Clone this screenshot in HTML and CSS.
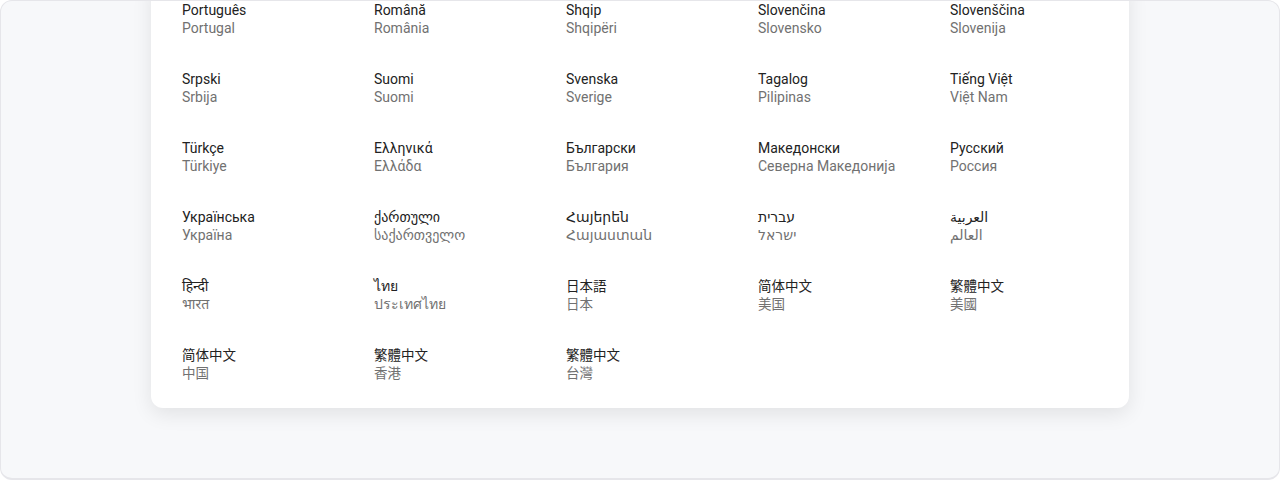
FILE: index.html
```html
<!DOCTYPE html>
<html lang="en">
<head>
<meta charset="utf-8">
<title>Languages</title>
<link rel="stylesheet" href="styles.css">
</head>
<body>
<div class="frame">
  <div class="card">
    <div class="grid">
      <div class="item"><div class="name">Português</div><div class="region">Portugal</div></div>
      <div class="item"><div class="name">Română</div><div class="region">România</div></div>
      <div class="item"><div class="name">Shqip</div><div class="region">Shqipëri</div></div>
      <div class="item"><div class="name">Slovenčina</div><div class="region">Slovensko</div></div>
      <div class="item"><div class="name">Slovenščina</div><div class="region">Slovenija</div></div>

      <div class="item"><div class="name">Srpski</div><div class="region">Srbija</div></div>
      <div class="item"><div class="name">Suomi</div><div class="region">Suomi</div></div>
      <div class="item"><div class="name">Svenska</div><div class="region">Sverige</div></div>
      <div class="item"><div class="name">Tagalog</div><div class="region">Pilipinas</div></div>
      <div class="item"><div class="name">Tiếng Việt</div><div class="region">Việt Nam</div></div>

      <div class="item"><div class="name">Türkçe</div><div class="region">Türkiye</div></div>
      <div class="item"><div class="name">Ελληνικά</div><div class="region">Ελλάδα</div></div>
      <div class="item"><div class="name">Български</div><div class="region">България</div></div>
      <div class="item"><div class="name">Македонски</div><div class="region">Северна Македонија</div></div>
      <div class="item"><div class="name">Русский</div><div class="region">Россия</div></div>

      <div class="item"><div class="name">Українська</div><div class="region">Україна</div></div>
      <div class="item"><div class="name">ქართული</div><div class="region">საქართველო</div></div>
      <div class="item"><div class="name">Հայերեն</div><div class="region">Հայաստան</div></div>
      <div class="item rtl"><div class="name" dir="rtl">עברית</div><div class="region" dir="rtl">ישראל</div></div>
      <div class="item rtl"><div class="name" dir="rtl">العربية</div><div class="region" dir="rtl">العالم</div></div>

      <div class="item"><div class="name">हिन्दी</div><div class="region">भारत</div></div>
      <div class="item"><div class="name">ไทย</div><div class="region">ประเทศไทย</div></div>
      <div class="item jp"><div class="name">日本語</div><div class="region">日本</div></div>
      <div class="item sc"><div class="name">简体中文</div><div class="region">美国</div></div>
      <div class="item tc"><div class="name">繁體中文</div><div class="region">美國</div></div>

      <div class="item sc"><div class="name">简体中文</div><div class="region">中国</div></div>
      <div class="item tc"><div class="name">繁體中文</div><div class="region">香港</div></div>
      <div class="item tc"><div class="name">繁體中文</div><div class="region">台灣</div></div>
    </div>
  </div>
</div>
</body>
</html>
```

FILE: styles.css
```css
html, body {
  margin: 0;
  padding: 0;
}

body {
  width: 1280px;
  height: 480px;
  background: #ffffff;
  font-family: "Roboto", "Noto Sans", "DejaVu Sans", "Noto Sans CJK SC", sans-serif;
}

.frame {
  box-sizing: border-box;
  width: 1280px;
  height: 480px;
  border: 1px solid #e6e6ea;
  border-bottom-width: 2px;
  border-radius: 12px;
  background: #f7f8fa;
  overflow: hidden;
}

.card {
  width: 978px;
  margin: -24px auto 0;
  padding: 24px 31px 26px;
  box-sizing: border-box;
  background: #ffffff;
  border-radius: 12px;
  box-shadow: 0 6px 20px rgba(0, 0, 0, 0.09);
}

.grid {
  display: grid;
  grid-template-columns: repeat(5, 1fr);
  column-gap: 44px;
  row-gap: 33px;
}

.item {
  display: flex;
  flex-direction: column;
  font-size: 14px;
  line-height: 18px;
}

.rtl {
  align-items: flex-start;
}

.name {
  color: #222222;
}

.region {
  color: #717171;
}

.jp { font-family: "Roboto", "Noto Sans CJK JP", sans-serif; font-size: 13.5px; }
.sc { font-family: "Roboto", "Noto Sans CJK SC", sans-serif; font-size: 13.5px; }
.tc { font-family: "Roboto", "Noto Sans CJK TC", sans-serif; font-size: 13.5px; }
```
